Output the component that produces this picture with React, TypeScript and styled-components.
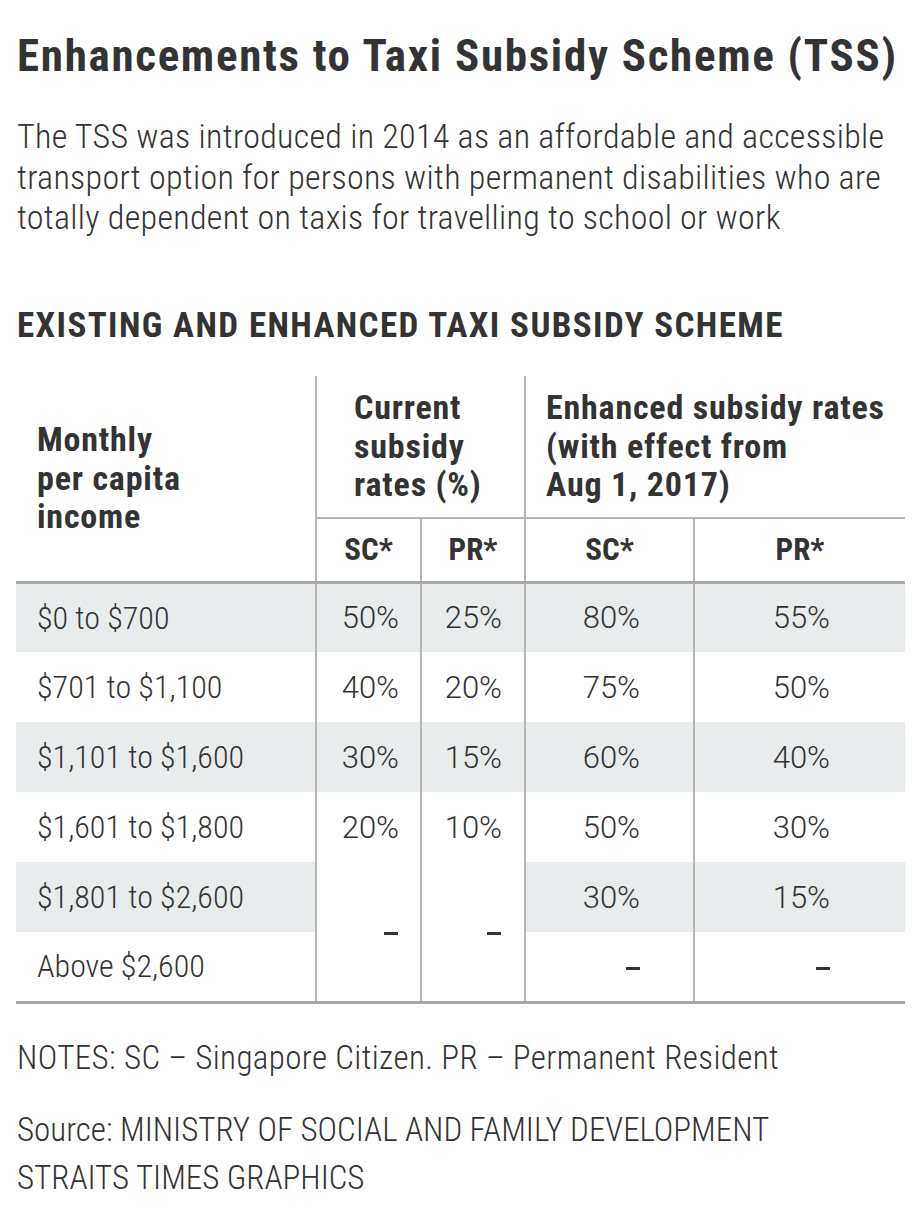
import styled, { createGlobalStyle } from "styled-components";

const Global = createGlobalStyle`
  body {
    margin: 0;
    background: #fff;
    color: #333;
    font-family: "Roboto Condensed", "Roboto", "Liberation Sans", sans-serif;
  }
`;

const Page = styled("div")`
  width: 920px;
  padding: 29px 15px 0 17px;
  box-sizing: border-box;
`;

const Title = styled("h1")`
  margin: 0;
  font-size: 45px;
  line-height: 54px;
  font-weight: 700;
  letter-spacing: 1.7px;
`;

const Intro = styled("p")`
  margin: 33px 0 0;
  font-size: 34px;
  line-height: 40.5px;
  font-weight: 300;
  letter-spacing: 0.3px;
`;

const SectionHeading = styled("h2")`
  margin: 68px 0 0;
  font-size: 35px;
  line-height: 40px;
  font-weight: 700;
  letter-spacing: 1.4px;
  text-transform: uppercase;
`;

const Table = styled("table")`
  margin: 30px 0 0 -1px;
  width: 889px;
  border-collapse: collapse;
  table-layout: fixed;
`;

const HeadCell = styled("th")<{ $first?: boolean; $padLeft?: number }>`
  padding: 0 0 0 ${(p) => p.$padLeft ?? 0}px;
  border-left: ${(p) => (p.$first ? "none" : "2px solid #b5b5b5")};
  text-align: left;
  vertical-align: middle;
  font-size: 34px;
  line-height: 38.5px;
  font-weight: 700;
  letter-spacing: 0.8px;
  height: 141px;
`;

const SubHeadCell = styled("th")`
  padding: 0;
  border-left: 2px solid #b5b5b5;
  border-top: 2px solid #b5b5b5;
  border-bottom: 3px solid #a9a9a9;
  text-align: center;
  font-size: 31px;
  font-weight: 700;
  height: 62px;
`;

const Row = styled("tr")<{ $shade?: boolean }>`
  height: 70px;
  background: ${(p) => (p.$shade ? "#e9eced" : "#fff")};

  &:last-child {
    border-bottom: 3px solid #a9a9a9;
  }
`;

const LabelCell = styled("td")`
  padding: 0 0 0 21px;
  font-size: 32px;
  font-weight: 300;
  white-space: nowrap;
`;

// the figures in the print graphic have wide digits, so they use the regular-width face
const ValueCell = styled("td")<{ $padRight: number; $blank?: boolean }>`
  padding: 0 ${(p) => p.$padRight}px 0 0;
  border-left: 2px solid #b5b5b5;
  text-align: right;
  font-family: "Roboto", "Liberation Sans", sans-serif;
  font-size: 31px;
  font-weight: 300;
  background: ${(p) => (p.$blank ? "#fff" : "transparent")};
`;

const Dash = styled("span")`
  display: inline-block;
  width: 14px;
  height: 3px;
  background: #333;
  vertical-align: middle;
`;

const Notes = styled("p")`
  margin: 34px 0 0;
  font-size: 33px;
  line-height: 40px;
  font-weight: 300;
  letter-spacing: 0.4px;
`;

const Source = styled("p")`
  margin: 28px 0 0;
  font-size: 33px;
  line-height: 48px;
  font-weight: 300;
`;

type Value = string | null;

const rows: { income: string; values: Value[] }[] = [
  { income: "$0 to $700", values: ["50%", "25%", "80%", "55%"] },
  { income: "$701 to $1,100", values: ["40%", "20%", "75%", "50%"] },
  { income: "$1,101 to $1,600", values: ["30%", "15%", "60%", "40%"] },
  { income: "$1,601 to $1,800", values: ["20%", "10%", "50%", "30%"] },
  { income: "$1,801 to $2,600", values: ["merged", "merged", "30%", "15%"] },
  { income: "Above $2,600", values: [null, null, "–", "–"] },
];

// right padding of each value column so the figures line up like the print graphic
const padRights = [21, 22, 53, 75];

const renderValue = (v: string) => (v === "–" ? <Dash /> : v);

const App = () => {
  return (
    <Page>
      <Global />
      <Title>Enhancements to Taxi Subsidy Scheme (TSS)</Title>
      <Intro>
        The TSS was introduced in 2014 as an affordable and accessible transport option for persons with permanent
        disabilities who are totally dependent on taxis for travelling to school or work
      </Intro>

      <SectionHeading>Existing and enhanced taxi subsidy scheme</SectionHeading>

      <Table>
        <colgroup>
          <col style={{ width: 300 }} />
          <col style={{ width: 105 }} />
          <col style={{ width: 104 }} />
          <col style={{ width: 169 }} />
          <col style={{ width: 211 }} />
        </colgroup>
        <thead>
          <tr>
            <HeadCell $first $padLeft={21} rowSpan={2} style={{ borderBottom: "3px solid #a9a9a9" }}>
              Monthly
              <br />
              per capita
              <br />
              income
            </HeadCell>
            <HeadCell colSpan={2} $padLeft={37}>
              Current
              <br />
              subsidy
              <br />
              rates (%)
            </HeadCell>
            <HeadCell colSpan={2} $padLeft={20}>
              Enhanced subsidy rates
              <br />
              (with effect from
              <br />
              Aug 1, 2017)
            </HeadCell>
          </tr>
          <tr>
            <SubHeadCell>SC*</SubHeadCell>
            <SubHeadCell>PR*</SubHeadCell>
            <SubHeadCell>SC*</SubHeadCell>
            <SubHeadCell>PR*</SubHeadCell>
          </tr>
        </thead>
        <tbody>
          {rows.map((row, i) => (
            <Row key={row.income} $shade={i % 2 === 0}>
              <LabelCell>{row.income}</LabelCell>
              {row.values.map((v, j) => {
                if (v === null) return null;
                if (v === "merged") {
                  return (
                    <ValueCell key={j} $padRight={padRights[j] + 1} $blank rowSpan={2}>
                      <Dash />
                    </ValueCell>
                  );
                }
                return (
                  <ValueCell key={j} $padRight={padRights[j]}>
                    {renderValue(v)}
                  </ValueCell>
                );
              })}
            </Row>
          ))}
        </tbody>
      </Table>

      <Notes>NOTES: SC – Singapore Citizen. PR – Permanent Resident</Notes>
      <Source>
        Source: MINISTRY OF SOCIAL AND FAMILY DEVELOPMENT
        <br />
        STRAITS TIMES GRAPHICS
      </Source>
    </Page>
  );
};

export default App;
